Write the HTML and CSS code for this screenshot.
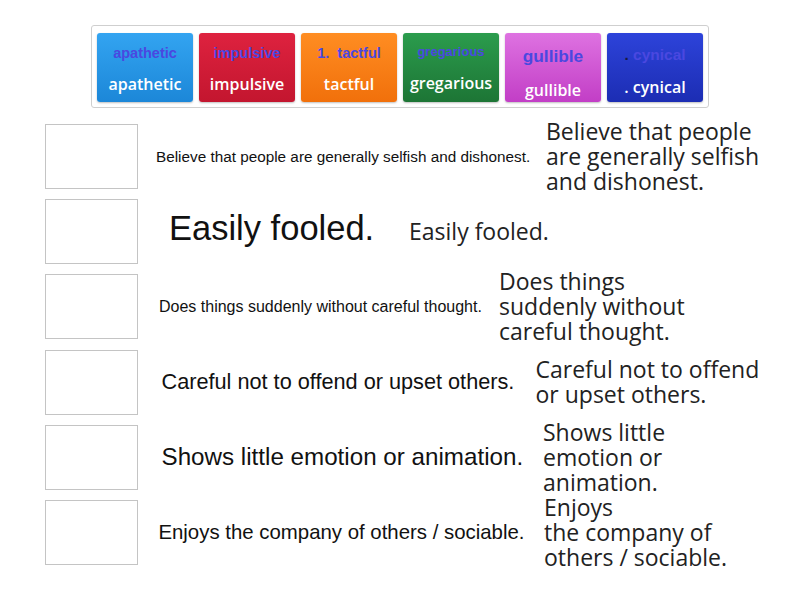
FILE: index.html
```html
<!DOCTYPE html>
<html lang="en">
<head>
    <meta charset="UTF-8">
    <meta name="viewport" content="width=device-width, initial-scale=1.0">
    <title>Match up</title>
    <link rel="stylesheet" href="styles.css">
</head>
<body>
    <div class="bank">
        <div class="tile tile-blue">
            <div class="tile-pic">apathetic</div>
            <div class="tile-label">apathetic</div>
        </div>
        <div class="tile tile-red">
            <div class="tile-pic">impulsive</div>
            <div class="tile-label">impulsive</div>
        </div>
        <div class="tile tile-orange">
            <div class="tile-pic">1.&nbsp; tactful</div>
            <div class="tile-label">tactful</div>
        </div>
        <div class="tile tile-green">
            <div class="tile-pic tile-pic-small">gregarious</div>
            <div class="tile-label">gregarious</div>
        </div>
        <div class="tile tile-pink">
            <div class="tile-pic tile-pic-big">gullible</div>
            <div class="tile-label">gullible</div>
        </div>
        <div class="tile tile-navy">
            <div class="tile-pic tile-pic-mid"><span class="dot">.</span> cynical</div>
            <div class="tile-label">. cynical</div>
        </div>
    </div>

    <div class="rows">
        <div class="row row-1">
            <div class="drop"></div>
            <div class="pic">Believe that people are generally selfish and dishonest.</div>
            <div class="answer">Believe that people<br>are generally selfish<br>and dishonest.</div>
        </div>
        <div class="row row-2">
            <div class="drop"></div>
            <div class="pic">Easily fooled.</div>
            <div class="answer">Easily fooled.</div>
        </div>
        <div class="row row-3">
            <div class="drop"></div>
            <div class="pic">Does things suddenly without careful thought.</div>
            <div class="answer">Does things<br>suddenly without<br>careful thought.</div>
        </div>
        <div class="row row-4">
            <div class="drop"></div>
            <div class="pic">Careful not to offend or upset others.</div>
            <div class="answer">Careful not to offend<br>or upset others.</div>
        </div>
        <div class="row row-5">
            <div class="drop"></div>
            <div class="pic">Shows little emotion or animation.</div>
            <div class="answer">Shows little<br>emotion or<br>animation.</div>
        </div>
        <div class="row row-6">
            <div class="drop"></div>
            <div class="pic">Enjoys the company of others / sociable.</div>
            <div class="answer">Enjoys<br>the company of<br>others / sociable.</div>
        </div>
    </div>
</body>
</html>
```

FILE: styles.css
```css
body {
    margin: 0;
    font-family: "Open Sans", "Liberation Sans", sans-serif;
    background: #fff;
    color: #222;
}

/* word bank */
.bank {
    width: 606px;
    margin: 25px auto 0;
    padding: 7px 5px 5px;
    border: 1px solid #cfcfcf;
    border-radius: 3px;
    display: flex;
    gap: 6px;
}
.tile {
    width: 96px;
    height: 69px;
    box-sizing: border-box;
    padding-top: 11px;
    border-radius: 3px;
    text-align: center;
    box-shadow: 0 1px 2px rgba(0, 0, 0, 0.25);
}
.tile-pic {
    height: 18px;
    line-height: 18px;
    margin-bottom: 11px;
    font-family: "Liberation Sans", Arial, sans-serif;
    font-weight: bold;
    font-size: 14.5px;
    color: #4a48e0;
    white-space: nowrap;
}
.tile-pic-small {
    font-size: 13px;
    height: 16px;
    line-height: 16px;
    margin-bottom: 12px;
}
.tile-pic-big {
    font-size: 17.3px;
    height: 24px;
    line-height: 24px;
}
.tile-pic-mid {
    font-size: 15.5px;
    height: 21px;
    line-height: 21px;
}
.dot {
    color: #1a1a40;
}
.tile-label {
    line-height: 22px;
    font-size: 16px;
    font-weight: 600;
    color: #fff;
    white-space: nowrap;
}
.tile-blue { background: linear-gradient(#33a4f1, #1c87d8); }
.tile-red { background: linear-gradient(#de223f, #c3162f); }
.tile-orange { background: linear-gradient(#ff8d22, #f1700b); }
.tile-green { background: linear-gradient(#2b9c4d, #1d7535); }
.tile-pink { background: linear-gradient(#de72e1, #c23ec6); }
.tile-navy { background: linear-gradient(#2d43da, #1c2db3); }

/* matching rows */
.rows {
    margin-top: 16px;
    padding-left: 45px;
}
.row {
    display: flex;
    align-items: center;
    height: 65px;
    margin-bottom: 10.2px;
}
.drop {
    flex: none;
    width: 93px;
    height: 65px;
    box-sizing: border-box;
    border: 1px solid #c4c4c4;
}
.pic {
    flex: none;
    box-sizing: border-box;
    font-family: "Liberation Sans", Arial, sans-serif;
    color: #111;
    white-space: nowrap;
}
.answer {
    font-size: 23px;
    line-height: 25px;
    color: #222;
    white-space: nowrap;
}
.row-1 .pic { width: 408px; padding-left: 18px; font-size: 15.3px; }
.row-2 .pic { width: 271px; padding-left: 31px; font-size: 34.5px; margin-bottom: 6px; }
.row-3 .pic { width: 361px; padding-left: 21px; font-size: 16px; }
.row-4 .pic { width: 397.5px; padding-left: 23.5px; font-size: 21.7px; }
.row-5 .pic { width: 405px; padding-left: 23.5px; font-size: 24.2px; }
.row-6 .pic { width: 406px; padding-left: 20.4px; font-size: 20.4px; }
```
